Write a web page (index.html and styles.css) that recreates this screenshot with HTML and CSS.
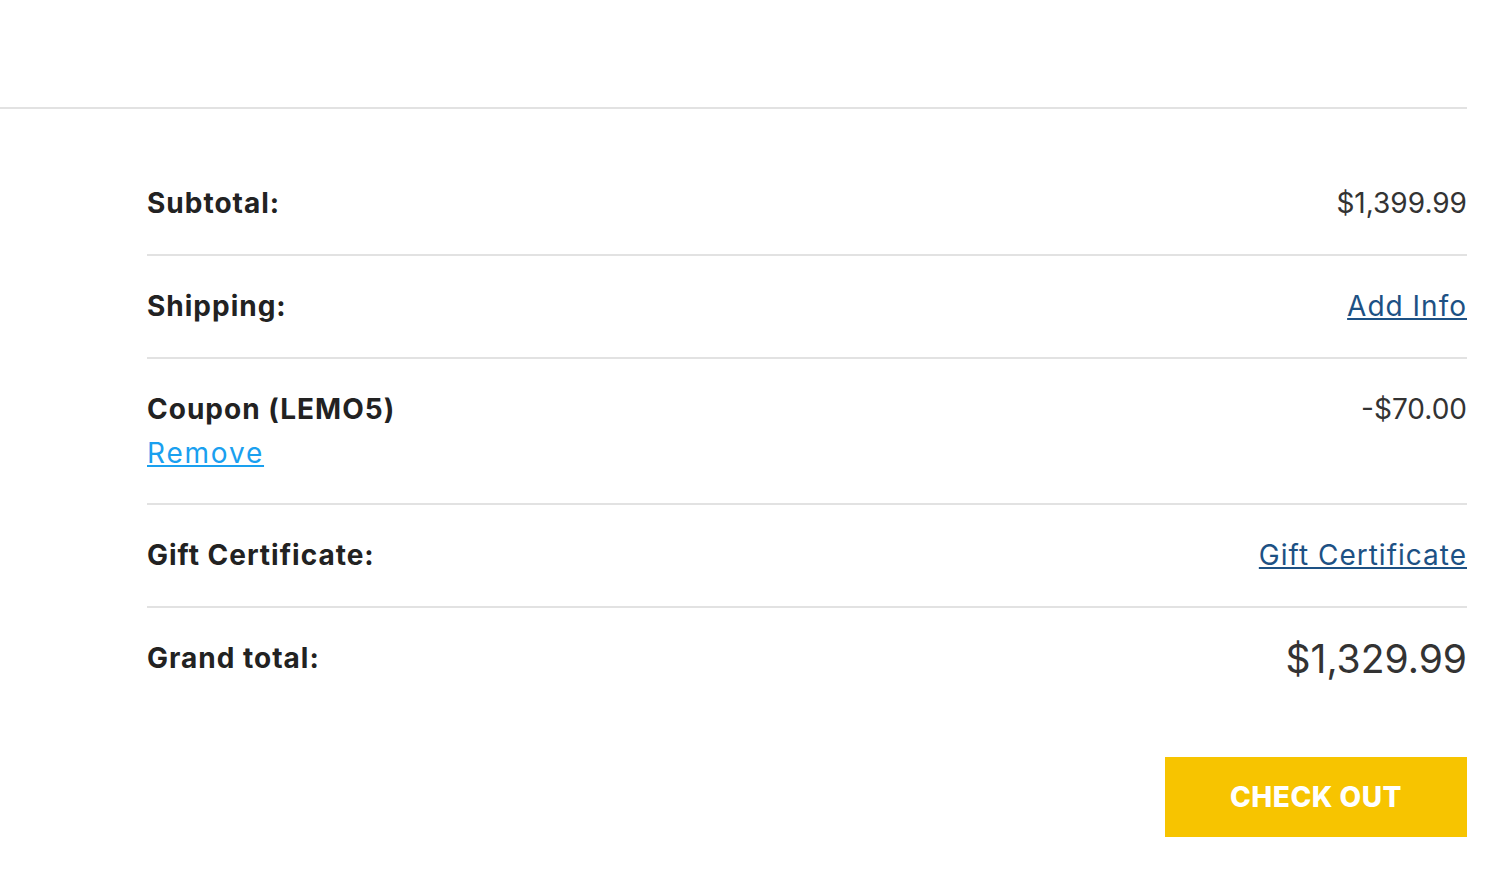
FILE: index.html
```html
<!DOCTYPE html>
<html lang="en">
<head>
    <meta charset="UTF-8">
    <meta name="viewport" content="width=device-width, initial-scale=1.0">
    <title>Cart Totals</title>
    <link rel="stylesheet" href="styles.css">
</head>
<body>
    <div class="cart">
        <div class="cart-top"></div>

        <ul class="totals">
            <li class="totals-row">
                <div class="totals-label">Subtotal:</div>
                <div class="totals-value">$1,399.99</div>
            </li>
            <li class="totals-row">
                <div class="totals-label">Shipping:</div>
                <div class="totals-value"><a href="#" class="info-link">Add Info</a></div>
            </li>
            <li class="totals-row">
                <div class="totals-label">
                    Coupon (LEMO5)
                    <div class="remove"><a href="#" class="remove-link">Remove</a></div>
                </div>
                <div class="totals-value">-$70.00</div>
            </li>
            <li class="totals-row">
                <div class="totals-label">Gift Certificate:</div>
                <div class="totals-value"><a href="#" class="info-link">Gift Certificate</a></div>
            </li>
            <li class="totals-row grand">
                <div class="totals-label">Grand total:</div>
                <div class="totals-value">$1,329.99</div>
            </li>
        </ul>

        <div class="actions">
            <a href="#" class="checkout-btn">Check Out</a>
        </div>
    </div>
</body>
</html>
```

FILE: styles.css
```css
body {
    font-family: Inter, "Noto Sans", sans-serif;
    margin: 0;
    background-color: #fff;
    color: #222;
}

.cart {
    width: 1467px;
}

.cart-top {
    height: 107px;
    border-bottom: 2px solid #e2e2e2;
}

.totals {
    list-style: none;
    margin: 44px 0 0 147px;
    padding: 0;
}

.totals-row {
    display: flex;
    justify-content: space-between;
    align-items: flex-start;
    padding: 28px 0;
    line-height: 45px;
    border-bottom: 2px solid #e2e2e2;
}

.totals-row:last-child {
    border-bottom: none;
}

.totals-label {
    font-size: 28px;
    font-weight: 700;
    letter-spacing: 1px;
    color: #222;
}

.totals-value {
    font-size: 28px;
    color: #333;
}

.grand .totals-value {
    font-size: 39px;
}

.info-link {
    color: #1d5184;
    letter-spacing: 1px;
    text-decoration: underline;
}

.remove {
    line-height: 43px;
}

.remove-link {
    font-weight: 400;
    color: #1aa0ef;
    letter-spacing: 1.8px;
    text-decoration: underline;
}

.actions {
    display: flex;
    justify-content: flex-end;
    margin-top: 48px;
}

.checkout-btn {
    display: flex;
    align-items: center;
    justify-content: center;
    width: 302px;
    height: 80px;
    background: #f7c400;
    color: #fff;
    font-size: 28px;
    font-weight: 800;
    text-transform: uppercase;
    text-decoration: none;
    letter-spacing: 0.5px;
}
```
